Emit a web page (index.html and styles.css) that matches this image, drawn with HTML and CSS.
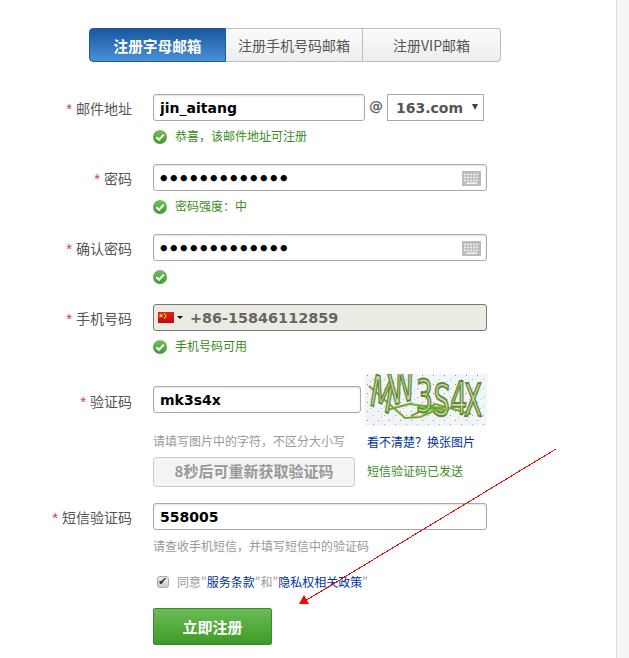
FILE: index.html
```html
<!DOCTYPE html>
<html lang="zh">
<head>
<meta charset="utf-8">
<title>注册字母邮箱</title>
<link rel="stylesheet" href="styles.css">
</head>
<body>
<svg class="defs" width="0" height="0" aria-hidden="true">
  <defs>
    <linearGradient id="okg" x1="0" y1="0" x2="0" y2="1">
      <stop offset="0" stop-color="#74bf5e"/>
      <stop offset="1" stop-color="#3f9a2c"/>
    </linearGradient>
    <linearGradient id="flagg" x1="0" y1="0" x2="0" y2="1">
      <stop offset="0" stop-color="#e3201a"/>
      <stop offset="1" stop-color="#b70f0c"/>
    </linearGradient>
    <symbol id="ok" viewBox="0 0 14 14">
      <circle cx="7" cy="7" r="7" fill="url(#okg)"/>
      <path d="M3.4 7.2 6 9.8 10.8 4.6" fill="none" stroke="#fff" stroke-width="2"/>
    </symbol>
    <symbol id="kbd" viewBox="0 0 19 15">
      <rect width="19" height="15" fill="#bcbcbc"/>
      <path d="M2 3.500h15M2 6.500h15M2 9.500h15" stroke="#f1f1f1" stroke-width="1.400" stroke-dasharray="2 1"/>
      <path d="M4 12.200h11" stroke="#f1f1f1" stroke-width="1.600"/>
    </symbol>
  </defs>
</svg>
<div class="page">
  <main class="main">
    <nav class="tabs">
      <a class="tab tab-active">注册字母邮箱</a>
      <a class="tab">注册手机号码邮箱</a>
      <a class="tab">注册VIP邮箱</a>
    </nav>
    <form class="form">
      <div class="row">
        <label class="label"><span class="star">*</span>邮件地址</label>
        <div class="field">
          <div class="line">
            <input class="input input-email" type="text" value="jin_aitang">
            <span class="at">@</span>
            <div class="select">163.com<span class="select-arrow"></span></div>
          </div>
          <div class="msg"><svg class="ok"><use href="#ok"/></svg><span class="msg-text">恭喜，该邮件地址可注册</span></div>
        </div>
      </div>
      <div class="row">
        <label class="label"><span class="star">*</span>密码</label>
        <div class="field">
          <div class="pw">
            <input class="input input-full input-pw" type="password" value="1234567890123">
            <svg class="kbd"><use href="#kbd"/></svg>
          </div>
          <div class="msg"><svg class="ok"><use href="#ok"/></svg><span class="msg-text">密码强度：中</span></div>
        </div>
      </div>
      <div class="row">
        <label class="label"><span class="star">*</span>确认密码</label>
        <div class="field">
          <div class="pw">
            <input class="input input-full input-pw" type="password" value="1234567890123">
            <svg class="kbd"><use href="#kbd"/></svg>
          </div>
          <div class="msg"><svg class="ok"><use href="#ok"/></svg></div>
        </div>
      </div>
      <div class="row">
        <label class="label"><span class="star">*</span>手机号码</label>
        <div class="field">
          <div class="phone">
            <svg class="flag" viewBox="0 0 16 11" width="16" height="11">
              <rect width="16" height="11" fill="url(#flagg)"/>
              <path d="M3 1l.7 1.800H5.500L4.100 4l.5 1.800L3 4.700 1.400 5.800 1.900 4 .5 2.800h1.800z" fill="#fbdc32"/>
              <rect x="6" y="1" width="1.500" height="1.500" fill="#fbdc32"/>
              <rect x="7" y="3" width="1.500" height="1.500" fill="#fbdc32"/>
              <rect x="6" y="5" width="1.500" height="1.500" fill="#fbdc32"/>
            </svg>
            <span class="caret"></span>
            <span class="phone-num">+86-15846112859</span>
          </div>
          <div class="msg"><svg class="ok"><use href="#ok"/></svg><span class="msg-text">手机号码可用</span></div>
        </div>
      </div>
      <div class="row row-captcha">
        <label class="label label-captcha"><span class="star">*</span>验证码</label>
        <div class="field">
          <div class="captcha-line">
            <input class="input input-captcha" type="text" value="mk3s4x">
            <svg class="captcha" viewBox="0 0 122 52" width="122" height="52" role="img" aria-label="验证码图片">
              <defs>
                <pattern id="noise" width="11" height="9" patternUnits="userSpaceOnUse">
                  <rect x="2" y="1" width="1" height="1" fill="#8a9a70"/>
                  <rect x="8" y="5" width="1" height="1" fill="#a5b392"/>
                  <rect x="5" y="7" width="1" height="1" fill="#c2ccb2"/>
                </pattern>
              </defs>
              <rect width="122" height="52" fill="#f1f4f8"/>
              <rect width="122" height="52" fill="url(#noise)"/>
              <path d="M4 12 40 44 55 43 76 34 44 30 22 36M60 34 84 36M46 42 70 30 106 40" fill="none" stroke="#7ba03a" stroke-width="2"/>
              <text class="cap-text" transform="scale(.6 1)" x="6 42 85 112 142 165" y="30 32 38 40 40 42" rotate="16 -10 0 6 0 0">MW3S4X</text>
              <path d="M45 29 65 36 82 36" fill="none" stroke="#5ecb3c" stroke-width="1.500"/>
            </svg>
          </div>
          <div class="captcha-hint">
            <span class="hint hint-captcha">请填写图片中的字符，不区分大小写</span>
            <a class="link">看不清楚？换张图片</a>
          </div>
          <div class="sms-line">
            <button class="resend" type="button">8秒后可重新获取验证码</button>
            <span class="sent">短信验证码已发送</span>
          </div>
        </div>
      </div>
      <div class="row row-sms">
        <label class="label"><span class="star">*</span>短信验证码</label>
        <div class="field">
          <input class="input input-full" type="text" value="558005">
          <div class="hint hint-sms">请查收手机短信，并填写短信中的验证码</div>
          <label class="agree">
            <input class="check" type="checkbox" checked>
            <span>同意"<a class="link">服务条款</a>"和"<a class="link">隐私权相关政策</a>"</span>
          </label>
          <button class="submit" type="button">立即注册</button>
        </div>
      </div>
    </form>
  </main>
  <aside class="side"></aside>
</div>
<svg class="arrow" width="629" height="658" viewBox="0 0 629 658" aria-hidden="true">
  <path class="arrow-line" d="M556 449 305 601" stroke="#f00" stroke-width="1" fill="none"/>
  <path d="M304 595 309 604H299z" fill="#f00"/>
</svg>
</body>
</html>
```
FILE: styles.css
```css
* { box-sizing: border-box; }
html, body { margin: 0; padding: 0; height: 658px; overflow: hidden; background: #fff; }
body {
  font-family: "Noto Sans CJK SC", "Liberation Sans", sans-serif;
  font-size: 14px;
  color: #555;
  position: relative;
}
.defs { position: absolute; }
.page { display: flex; height: 658px; }
.main { width: 616px; padding-top: 28px; flex: none; }
.side { flex: 1; background: #f5f5f5; border-left: 1px solid #ddd; }

.tabs {
  display: grid;
  grid-template-columns: 137px 137px 138px;
  width: 412px;
  height: 34px;
  margin-left: 89px;
}
.tab {
  display: flex;
  align-items: center;
  justify-content: center;
  border: 1px solid #bdbdbd;
  border-left: 0;
  background: linear-gradient(#fbfbfb, #eceeee);
  color: #555;
  font-size: 14px;
}
.tab:last-child { border-radius: 0 4px 4px 0; }
.tab-active {
  border: 1px solid #1b5a9f;
  border-radius: 4px 0 0 4px;
  background: linear-gradient(#17589f, #4a90d8);
  color: #fff;
  font-size: 14.67px;
  font-weight: 700;
}

.form { margin-top: 32px; }
.row {
  display: grid;
  grid-template-columns: 132px 1fr;
  column-gap: 21px;
  padding-bottom: 19px;
}
.label { text-align: right; line-height: 29px; font-size: 14px; color: #555; }
.label-captcha { padding-top: 13px; }
.star { color: #d8345f; margin-right: 4px; font-family: "Liberation Sans", sans-serif; font-size: 15px; }

.field { min-width: 0; }
.line { display: flex; align-items: center; }
.input {
  display: block;
  height: 27px;
  padding: 1px 6px 0;
  border: 1px solid #aaa;
  border-radius: 3px;
  box-shadow: inset 0 1px 2px rgba(0, 0, 0, .12);
  background: #fff;
  color: #000;
  font-family: "DejaVu Sans", sans-serif;
  font-size: 14px;
  font-weight: 700;
  outline: 0;
}
.input-email { width: 212px; }
.input-full { width: 334px; }
.input-captcha { width: 208px; margin-bottom: 1px; }
.at { width: 22px; text-align: center; font: 700 14px "DejaVu Sans", sans-serif; color: #666; position: relative; top: -2px; }
.select {
  position: relative;
  width: 97px;
  height: 27px;
  padding-left: 8px;
  border: 1px solid #aaa;
  font: 700 14px/26px "DejaVu Sans", sans-serif;
  color: #555;
}
.select-arrow {
  position: absolute;
  right: 5px;
  top: 9px;
  width: 0;
  height: 0;
  border-left: 3.500px solid transparent;
  border-right: 3.500px solid transparent;
  border-top: 6px solid #444;
}
.msg {
  display: flex;
  align-items: center;
  gap: 8px;
  height: 16px;
  margin-top: 8px;
  font-size: 12px;
  color: #3c8a1e;
}
.msg-text { margin-top: -3px; }
.ok { width: 14px; height: 14px; flex: none; }

.pw { position: relative; width: 334px; }
.input-pw { font-size: 18px; letter-spacing: -1.500px; padding-left: 4px; }
.kbd { position: absolute; right: 6px; top: 7px; width: 19px; height: 15px; }

.phone {
  display: flex;
  align-items: center;
  width: 334px;
  height: 27px;
  padding-left: 4px;
  border: 1px solid #777;
  border-radius: 3px;
  background: #ebebe4;
}
.flag { flex: none; }
.caret {
  width: 0;
  height: 0;
  margin: 0 7px 0 3px;
  border-left: 3px solid transparent;
  border-right: 3px solid transparent;
  border-top: 3px solid #111;
}
.phone-num { font: 700 14.400px "DejaVu Sans", sans-serif; color: #666; }

.row-captcha { padding-bottom: 16px; }
.captcha-line { display: flex; align-items: center; gap: 4px; }
.captcha { display: block; flex: none; }
.cap-text {
  font-family: "DejaVu Sans", sans-serif;
  font-size: 44px;
  fill: #cfdcb0;
  stroke: #5f8a30;
  stroke-width: 2;
}
.captcha-hint { display: flex; align-items: center; height: 16px; margin-top: 7px; }
.hint { font-size: 12px; color: #999; line-height: 16px; }
.hint-captcha { width: 214px; flex: none; }
.link { color: #003399; font-size: 12px; }
.sms-line { display: flex; align-items: center; margin-top: 8px; }
.resend {
  width: 202px;
  height: 30px;
  padding: 0 0 3px;
  border: 1px solid #ccc;
  border-radius: 3px;
  background: #f4f4f4;
  color: #999;
  font-family: inherit;
  font-size: 15px;
  font-weight: 700;
}
.sent { margin: -3px 0 0 12px; font-size: 12px; color: #3c8a1e; }

.row-sms { padding-bottom: 0; }
.hint-sms { margin-top: 8px; }
.agree {
  display: flex;
  align-items: center;
  height: 16px;
  margin-top: 20px;
  padding-left: 4px;
  font-size: 12px;
  color: #999;
}
.agree span { margin-top: -2px; }
.check {
  appearance: none;
  position: relative;
  width: 12px;
  height: 12px;
  margin: 0 8px 0 0;
  border: 1px solid #aaa;
  border-radius: 3px;
  background: linear-gradient(#eee, #ccc);
}
.check::after {
  content: "✔";
  position: absolute;
  left: 0;
  top: -2px;
  font: 11px/13px "DejaVu Sans", sans-serif;
  color: #333;
}
.submit {
  display: block;
  width: 119px;
  height: 37px;
  margin-top: 18px;
  padding: 0;
  border: 1px solid #3b8a2a;
  border-radius: 2px;
  background: linear-gradient(#6bbb57, #3e9b26);
  color: #fff;
  font-family: inherit;
  font-size: 15px;
  font-weight: 700;
}

.arrow { position: absolute; left: 0; top: 0; pointer-events: none; }
.arrow-line { shape-rendering: crispEdges; }
```
